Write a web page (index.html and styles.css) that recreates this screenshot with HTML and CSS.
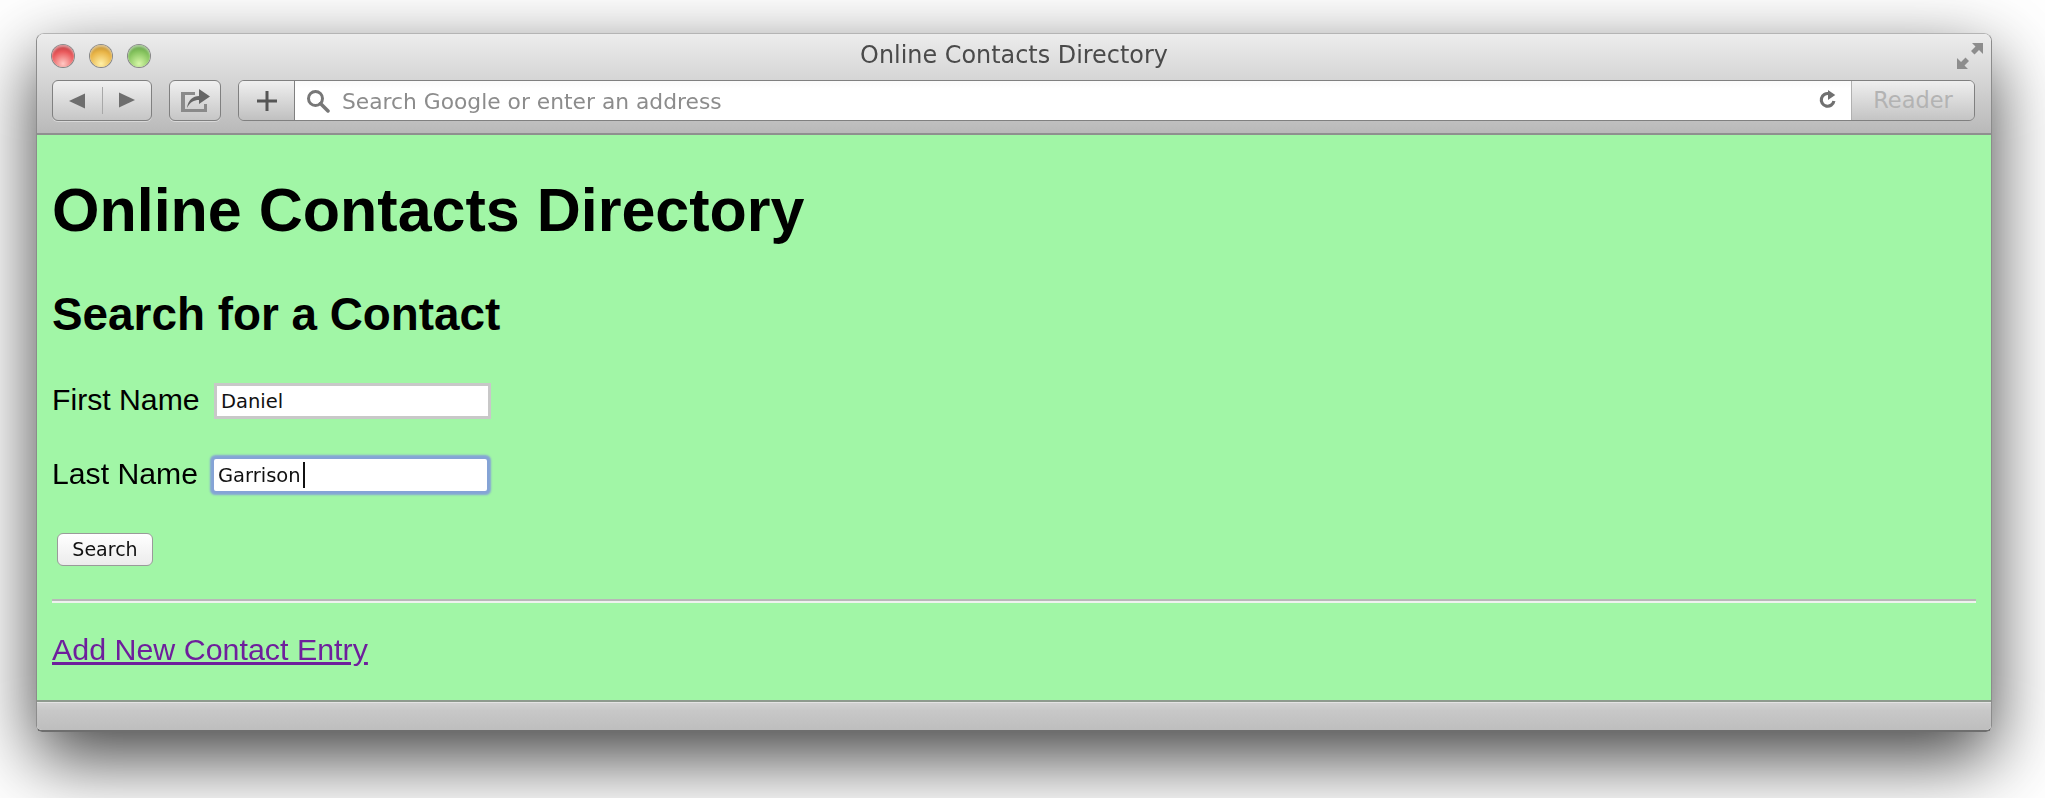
FILE: index.html
```html
<!DOCTYPE html>
<html lang="en">
<head>
<meta charset="utf-8">
<title>Online Contacts Directory</title>
<link rel="stylesheet" href="styles.css">
</head>
<body>
<div class="window">
  <header class="chrome">
    <div class="titlebar">
      <div class="lights">
        <span class="light red"></span>
        <span class="light amber"></span>
        <span class="light green"></span>
      </div>
      <div class="wintitle">Online Contacts Directory</div>
      <svg class="fullscreen" viewBox="0 0 28 28" width="28" height="28">
        <path d="M27 1H16l3.500 3.500-4.500 4.500 3.500 3.500 4.500-4.500L27 12z" fill="#8d8d8d"/>
        <path d="M1 27h11l-3.500-3.500 4.500-4.500-3.500-3.500-4.500 4.500L1 16z" fill="#8d8d8d"/>
      </svg>
    </div>
    <div class="toolbar">
      <div class="btn nav">
        <span class="navcell">
          <svg viewBox="0 0 18 18" width="18" height="18"><path d="M1 9 17 1.500v15z" fill="#6e6e6e"/></svg>
        </span>
        <span class="navcell sep">
          <svg viewBox="0 0 18 18" width="18" height="18"><path d="M17 9 1 1.500v15z" fill="#6e6e6e"/></svg>
        </span>
      </div>
      <div class="btn share">
        <svg viewBox="0 0 34 26" width="34" height="26">
          <path d="M3 4h14v3H7v14h19v-5h3v8H3z" fill="#8a8a8a"/>
          <path d="M9 20c1-8 6-12 12-12V1l11 7.500L21 16v-4c-5 0-9 2-12 8z" fill="#666"/>
        </svg>
      </div>
      <div class="urlbar">
        <div class="plus">
          <svg viewBox="0 0 20 20" width="20" height="20"><path d="M8.500 0h3v8.500H20v3h-8.500V20h-3v-8.500H0v-3h8.500z" fill="#555"/></svg>
        </div>
        <div class="address">
          <svg class="glass" viewBox="0 0 24 24" width="24" height="24">
            <circle cx="9.500" cy="9.500" r="7" fill="none" stroke="#777" stroke-width="3"/>
            <path d="M14.500 14.500 22 22" stroke="#777" stroke-width="3.500" stroke-linecap="round"/>
          </svg>
          <span class="placeholder">Search Google or enter an address</span>
          <svg class="reload" viewBox="0 0 22 24" width="20" height="22">
            <path d="M17.500 12a7 7 0 1 1-5-8" fill="none" stroke="#707070" stroke-width="3.500"/>
            <path d="M11 0l8 5.500-8 5.500z" fill="#707070"/>
          </svg>
        </div>
        <div class="reader">Reader</div>
      </div>
    </div>
  </header>
  <main class="page">
    <h1>Online Contacts Directory</h1>
    <h2>Search for a Contact</h2>
    <form class="form">
      <div class="row first">
        <label class="label" for="fn">First Name</label>
        <input class="field" id="fn" type="text" value="Daniel">
      </div>
      <div class="row second">
        <label class="label" for="ln">Last Name</label>
        <span class="fieldwrap">
          <input class="field focus" id="ln" type="text" value="Garrison">
          <span class="caret"></span>
        </span>
      </div>
      <button class="submit" type="button">Search</button>
    </form>
    <hr class="rule">
    <a class="link" href="#">Add New Contact Entry</a>
  </main>
  <footer class="statusbar"></footer>
</div>
</body>
</html>
```
FILE: styles.css
```css
html, body {
  margin: 0;
  height: 798px;
  overflow: hidden;
  background: #fff;
}
.window {
  box-sizing: border-box;
  width: 1956px;
  height: 699px;
  margin: 33px 0 0 36px;
  display: flex;
  flex-direction: column;
  border: 1px solid #8c8c8c;
  border-top-color: #b4b4b4;
  border-bottom: 2px solid #6e6e6e;
  border-radius: 8px 8px 6px 6px;
  overflow: hidden;
  box-shadow: 0 26px 72px rgba(0, 0, 0, .75);
  filter: blur(.5px);
}
.chrome {
  height: 99px;
  flex: none;
  background: linear-gradient(#ececec, #d6d6d6 45%, #b9b9b9);
  border-bottom: 2px solid #8f8f8f;
}
.titlebar {
  height: 46px;
  display: flex;
  align-items: center;
  position: relative;
  padding: 0 7px 2px 15px;
  box-sizing: border-box;
}
.lights { display: flex; gap: 16px; }
.light {
  width: 22px;
  height: 22px;
  border-radius: 50%;
  box-shadow: 0 0 0 1px rgba(0, 0, 0, .4), inset 0 2px 2px rgba(255, 255, 255, .45);
}
.red { background: radial-gradient(circle at 50% 85%, #ffc9c4, #ea5a5c 55%, #a62a30); }
.amber { background: radial-gradient(circle at 50% 85%, #fff0a8, #e9b548 55%, #a87820); }
.green { background: radial-gradient(circle at 50% 85%, #d6f7a8, #88c560 55%, #4c8c38); }
.wintitle {
  flex: 1;
  text-align: center;
  font: 23.900px/1 "DejaVu Sans", sans-serif;
  color: #4a4a4a;
  padding-right: 78px;
}
.fullscreen { flex: none; }
.toolbar {
  display: flex;
  align-items: flex-start;
  padding: 0 16px 0 15px;
}
.btn {
  box-sizing: border-box;
  height: 41px;
  display: flex;
  align-items: center;
  justify-content: center;
  border: 1px solid #808080;
  border-radius: 6px;
  background: linear-gradient(#f0f0f0, #c6c6c6);
  box-shadow: 0 1px 0 rgba(255, 255, 255, .4);
}
.nav { width: 100px; }
.navcell {
  flex: 1;
  height: 100%;
  display: flex;
  align-items: center;
  justify-content: center;
}
.sep { border-left: 1px solid #a8a8a8; height: 70%; }
.share { width: 52px; margin-left: 17px; }
.urlbar {
  flex: 1;
  margin-left: 17px;
  height: 41px;
  display: flex;
  box-sizing: border-box;
  border: 1px solid #808080;
  border-radius: 6px;
  overflow: hidden;
}
.plus {
  width: 55px;
  flex: none;
  display: flex;
  align-items: center;
  justify-content: center;
  background: linear-gradient(#f0f0f0, #c0c0c0);
  border-right: 1px solid #808080;
}
.address {
  flex: 1;
  display: flex;
  align-items: center;
  background: linear-gradient(#fafafa, #fff 20%);
  padding: 0 13px 0 11px;
}
.glass { flex: none; }
.placeholder {
  flex: 1;
  margin: 2px 0 0 12px;
  font: 21.800px/1 "DejaVu Sans", sans-serif;
  color: #8c8c8c;
}
.reload { flex: none; }
.reader {
  width: 122px;
  flex: none;
  display: flex;
  align-items: center;
  justify-content: center;
  font: 22.500px/1 "DejaVu Sans", sans-serif;
  color: #b3b3b3;
  background: linear-gradient(#efefef, #c4c4c4);
  border-left: 1px solid #b0b0b0;
}
.page {
  flex: 1;
  min-height: 0;
  padding: 0 15px;
  background: #a1f6a6;
  font-family: "Liberation Sans", Arial, sans-serif;
  color: #000;
}
h1 {
  margin: 40px 0 0;
  font-size: 61px;
  line-height: 70px;
  font-weight: 700;
}
h2 {
  margin: 42px 0 0;
  font-size: 45.850px;
  line-height: 54px;
  font-weight: 700;
}
.form { margin: 0; }
.row {
  display: flex;
  align-items: center;
}
.first { margin-top: 41px; }
.second { margin-top: 36px; }
.label {
  width: 162px;
  flex: none;
  font-size: 30.200px;
  line-height: 36px;
  margin-bottom: 2px;
}
.field {
  box-sizing: border-box;
  display: block;
  width: 277px;
  height: 36px;
  margin: 0;
  padding: 0 0 0 4px;
  border: 3px solid #c8c8c8;
  background: #fff;
  outline: none;
  font: 19.500px/1 "DejaVu Sans", sans-serif;
  color: #111;
}
.fieldwrap { position: relative; display: block; }
.field.focus {
  width: 273px;
  height: 32px;
  border: 0;
  padding: 0 0 0 4px;
  box-shadow: 0 0 2px 4px #85a3d6;
  border-radius: 2px;
}
.caret {
  position: absolute;
  left: 89px;
  top: 3px;
  width: 2px;
  height: 26px;
  background: #111;
}
.submit {
  display: block;
  box-sizing: border-box;
  width: 96px;
  height: 33px;
  margin: 39px 0 0 5px;
  padding: 0;
  border: 1px solid #9a9a9a;
  border-radius: 6px;
  background: linear-gradient(#fff, #ececec);
  font: 19px/1 "DejaVu Sans", sans-serif;
  color: #111;
}
.rule {
  height: 4px;
  margin: 33px 0 -1px;
  border: 0;
  background: linear-gradient(#b8b8b8 40%, #eef2ee 40%);
}
.link {
  display: inline-block;
  margin-top: 29px;
  font-size: 30.400px;
  line-height: 36px;
  color: #6e1f9c;
}
.statusbar {
  height: 30px;
  flex: none;
  box-sizing: border-box;
  border-top: 2px solid #8e9a8e;
  box-shadow: inset 0 1px 0 #e4e4e4;
  background: linear-gradient(#d2d2d2, #c8c8c8 30%, #bebebe);
}
```
